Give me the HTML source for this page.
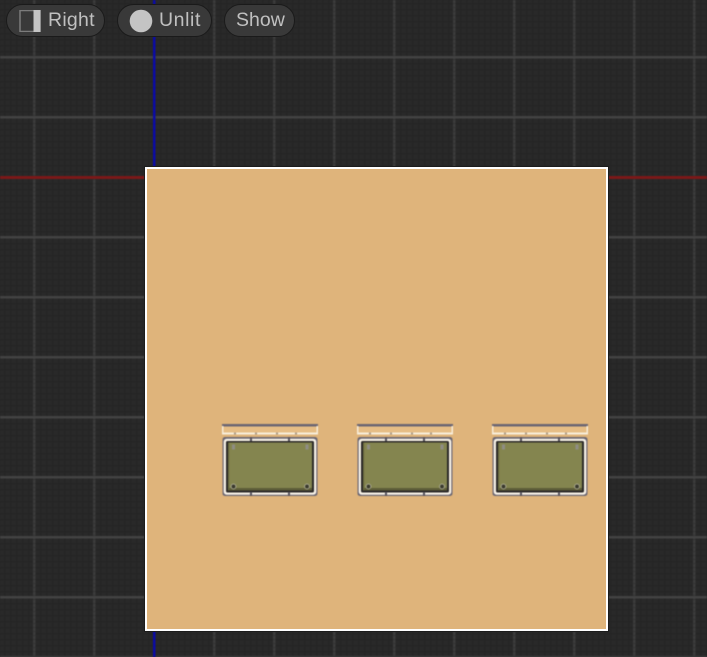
<!DOCTYPE html>
<html>
<head>
<meta charset="utf-8">
<style>
html,body{margin:0;padding:0;width:707px;height:657px;overflow:hidden;background:#262626;}
body{position:relative;font-family:"Liberation Sans",sans-serif;}
.abs{position:absolute;}
#bg{left:0;top:0;width:707px;height:657px;background-color:#272727;filter:blur(.6px);}
.btn{position:absolute;top:4px;height:31px;border:1.5px solid #1a1a1a;border-radius:17px;background:#393939;color:#c0c0c0;font-size:19.5px;line-height:31px;box-sizing:content-box;}
.btn span{position:absolute;top:0;white-space:nowrap;}
</style>
</head>
<body>
<svg id="bg" class="abs" width="707" height="657" viewBox="0 0 707 657" xmlns="http://www.w3.org/2000/svg">
<defs>
<pattern id="fine" width="6" height="6" patternUnits="userSpaceOnUse" x="4" y="3">
<rect width="6" height="6" fill="#292929"/>
<rect x="0" y="0" width="1.5" height="6" fill="#252525"/>
<rect x="0" y="0" width="6" height="1.5" fill="#252525"/>
</pattern>
<pattern id="vmaj" width="60" height="4" patternUnits="userSpaceOnUse" x="33" y="0">
<rect x="0" y="0" width="2.5" height="4" fill="#3c3c3c"/>
<rect x="0" y="3" width="2.5" height="1" fill="#333333"/>
</pattern>
<pattern id="hmaj" width="4" height="60" patternUnits="userSpaceOnUse" x="0" y="56">
<rect x="0" y="0" width="4" height="2.5" fill="#424242"/>
</pattern>
</defs>
<rect width="707" height="657" fill="url(#fine)"/>
<rect width="707" height="657" fill="url(#vmaj)"/>
<rect width="707" height="657" fill="url(#hmaj)"/>
<rect x="0" y="176" width="707" height="3" fill="#7c1818"/>
<rect x="153" y="0" width="2.5" height="657" fill="#0a0aa8"/>
</svg>

<div class="abs" style="left:144px;top:166px;width:465px;height:466px;background:#1c1c1c;"></div>
<div class="abs" style="left:145px;top:167px;width:463px;height:464px;background:#ffffff;"></div>
<div class="abs" style="left:147px;top:169px;width:459px;height:460px;background:#dfb47b;"></div>

<svg class="abs" style="left:0;top:0;filter:blur(.45px)" width="707" height="657" viewBox="0 0 707 657" xmlns="http://www.w3.org/2000/svg">
<defs>
<g id="item">
<rect x="0" y="0" width="96" height="10" fill="#e6bd85"/>
<rect x="0" y="0" width="96" height="2.5" fill="#6c6672"/>
<rect x="0" y="2" width="1.5" height="8" fill="#f7ecd8"/>
<rect x="94.5" y="2" width="1.5" height="8" fill="#f7ecd8"/>
<rect x="0" y="8.5" width="96" height="2" fill="#f8eedb"/>
<rect x="12" y="8.5" width="2" height="2" fill="#a89a88"/>
<rect x="33" y="8.5" width="2" height="2" fill="#a89a88"/>
<rect x="54" y="8.5" width="2" height="2" fill="#a89a88"/>
<rect x="73" y="8.5" width="2" height="2" fill="#a89a88"/>
<rect x="0.5" y="13" width="95" height="59" rx="2.5" fill="#6b6672"/>
<rect x="1.7" y="14.7" width="92.6" height="56" rx="3" fill="#f8f2e6"/>
<rect x="4" y="17" width="88" height="51.5" rx="1.5" fill="#2a2827"/>
<rect x="6" y="18.5" width="84" height="48" fill="#84854f"/>
<rect x="6" y="64" width="84" height="2.5" fill="#5d5d38"/>
<rect x="6" y="18.5" width="1.2" height="48" fill="#6b6b40"/>
<rect x="28" y="13" width="2" height="4" fill="#55525c"/>
<rect x="66" y="13" width="2" height="4" fill="#55525c"/>
<rect x="28" y="68" width="2" height="4" fill="#55525c"/>
<rect x="66" y="68" width="2" height="4" fill="#55525c"/>
<rect x="10" y="20.5" width="3" height="5" fill="#8f8d84"/>
<rect x="83.5" y="20.5" width="3" height="5" fill="#8f8d84"/>
<circle cx="11.5" cy="62.5" r="2.4" fill="#3a3a2c" stroke="#b0ae98" stroke-width=".9"/>
<circle cx="85" cy="62.5" r="2.4" fill="#3a3a2c" stroke="#b0ae98" stroke-width=".9"/>
</g>
</defs>
<use href="#item" x="222" y="424"/>
<use href="#item" x="357" y="424"/>
<use href="#item" x="492" y="424"/>
</svg>

<div class="btn" style="left:6px;width:97px;">
<svg class="abs" style="left:12px;top:5px" width="22" height="22" viewBox="0 0 22 22" xmlns="http://www.w3.org/2000/svg">
<rect x="1" y="0.5" width="20" height="21" fill="none" stroke="#7c7c7c" stroke-width="1.5"/>
<rect x="14.5" y="0" width="7" height="22" fill="#c4c4c4"/>
</svg>
<span style="left:41px;letter-spacing:.25px;">Right</span>
</div>
<div class="btn" style="left:117px;width:93px;">
<svg class="abs" style="left:11px;top:4px" width="24" height="24" viewBox="0 0 24 24" xmlns="http://www.w3.org/2000/svg">
<circle cx="12" cy="12" r="11.3" fill="#c4c4c4"/>
</svg>
<span style="left:41px;letter-spacing:.6px;">Unlit</span>
</div>
<div class="btn" style="left:224px;width:69px;">
<span style="left:11px;">Show</span>
</div>
</body>
</html>
